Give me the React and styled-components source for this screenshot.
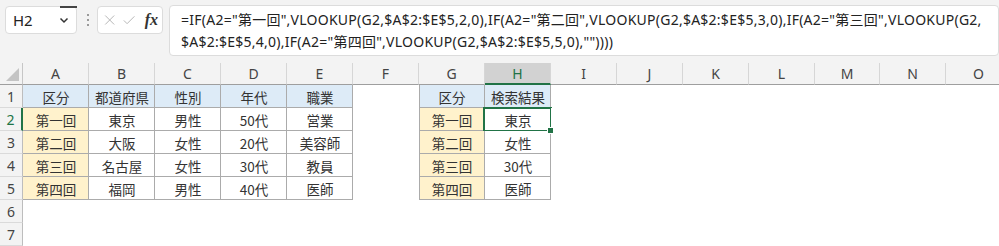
import styled, { createGlobalStyle } from "styled-components"

const GlobalStyle = createGlobalStyle`
body {
  margin: 0;
  background: #ffffff;
  font-family: "Noto Sans", "Noto Sans CJK JP", sans-serif;
}
`

const GREEN = "#217346"
const BORDER = "#ababab"

const Page = styled.div`
width: 999px;
height: 246px;
overflow: hidden;
background: #ffffff;
`

const FormulaBar = styled.div`
display: flex;
align-items: flex-start;
height: 63px;
padding: 5px 0 0 5px;
box-sizing: border-box;
background: #f3f3f3;
overflow: hidden;
`

const NameBox = styled.div`
position: relative;
display: flex;
align-items: center;
justify-content: space-between;
width: 92px;
height: 28px;
margin-top: 1px;
padding: 0 6px 0 7px;
box-sizing: border-box;
background: #ffffff;
border: 1px solid #dcdcdc;
border-radius: 4px;
font-size: 15px;
color: #222;
&::after {
  content: "";
  position: absolute;
  top: -1px;
  right: -1px;
  width: 17px;
  height: 2px;
  background: #444;
}
`

const Dots = styled.div`
display: flex;
flex-direction: column;
gap: 3px;
margin: 9px 8px 0 10px;
span {
  width: 2px;
  height: 2px;
  background: #9a9a9a;
}
`

const FuncBox = styled.div`
display: flex;
align-items: center;
gap: 8px;
width: 66px;
height: 28px;
margin-top: 1px;
padding: 0 4px 0 6px;
box-sizing: border-box;
background: #ffffff;
border: 1px solid #dcdcdc;
border-radius: 4px;
`

const Fx = styled.span`
font-family: "Liberation Serif", serif;
font-style: italic;
font-weight: bold;
font-size: 16px;
color: #333;
margin-left: 1px;
`

const FormulaBox = styled.div`
flex: none;
width: 830px;
height: 51px;
margin-left: 6px;
padding: 3px 0 0 11px;
box-sizing: border-box;
background: #ffffff;
border: 1px solid #dcdcdc;
border-radius: 4px;
font-size: 14px;
letter-spacing: 0.25px;
line-height: 22px;
color: #222;
`

const FormulaLine = styled.div`
white-space: nowrap;
`

const Sheet = styled.div`
display: grid;
grid-template-columns: 23px repeat(12, 66px) 65px 66px 66px;
grid-template-rows: 22px repeat(7, 23px);
font-family: "Noto Sans CJK JP", sans-serif;
`

const Corner = styled.div`
position: relative;
background: #f3f3f3;
border-right: 1px solid #c6c6c6;
border-bottom: 1px solid #9e9e9e;
&::after {
  content: "";
  position: absolute;
  right: 3px;
  bottom: 3px;
  border-style: solid;
  border-width: 0 0 13px 13px;
  border-color: transparent transparent #c4c4c4 transparent;
}
`

const ColHead = styled.div`
display: flex;
align-items: center;
justify-content: center;
background: ${p => (p.$active ? "#d2d2d2" : "#f3f3f3")};
border-right: 1px solid #d6d6d6;
border-bottom: ${p => (p.$active ? `2px solid ${GREEN}` : "1px solid #9e9e9e")};
font-family: "Noto Sans", sans-serif;
font-size: 14px;
color: ${p => (p.$active ? GREEN : "#444")};
`

const RowHead = styled.div`
display: flex;
align-items: center;
justify-content: center;
background: #f3f3f3;
border-bottom: 1px solid #dadada;
border-right: ${p => (p.$active ? `2px solid ${GREEN}` : "1px solid #bdbdbd")};
font-family: "Noto Sans", sans-serif;
font-size: 14px;
color: ${p => (p.$active ? GREEN : "#444")};
`

const fills = { blue: "#ddebf7", yellow: "#fff2cc", white: "#ffffff" }

const Cell = styled.div`
position: relative;
display: flex;
align-items: center;
justify-content: center;
background: ${p => fills[p.$fill] || "#ffffff"};
box-shadow: ${p =>
  p.$boxed
    ? `inset -1px -1px 0 ${BORDER}${p.$left ? `, inset 1px 0 0 ${BORDER}` : ""}`
    : "none"};
font-size: 13.5px;
color: #333;
&::after {
  content: "";
  display: ${p => (p.$selected ? "block" : "none")};
  position: absolute;
  inset: -1px -1px -1px -2px;
  border: 2px solid ${GREEN};
}
`

const Handle = styled.span`
position: absolute;
right: -3px;
bottom: -3px;
width: 5px;
height: 5px;
background: ${GREEN};
border: 1px solid #ffffff;
z-index: 2;
`

const columns = ["A", "B", "C", "D", "E", "F", "G", "H", "I", "J", "K", "L", "M", "N", "O"]

const rows = [
  ["区分", "都道府県", "性別", "年代", "職業", "", "区分", "検索結果"],
  ["第一回", "東京", "男性", "50代", "営業", "", "第一回", "東京"],
  ["第二回", "大阪", "女性", "20代", "美容師", "", "第二回", "女性"],
  ["第三回", "名古屋", "女性", "30代", "教員", "", "第三回", "30代"],
  ["第四回", "福岡", "男性", "40代", "医師", "", "第四回", "医師"],
]

const fillFor = (r, c) => {
  if (r === 0 && c !== 5) return "blue"
  if (c === 0 || c === 6) return "yellow"
  return "white"
}

const App = () => {
  return (
    <Page>
      <GlobalStyle />
      <FormulaBar>
        <NameBox>
          H2
          <svg width="12" height="12" viewBox="0 0 12 12">
            <path d="M2.5 4.5 L6 8 L9.5 4.5" fill="none" stroke="#333" strokeWidth="1.5" />
          </svg>
        </NameBox>
        <Dots>
          <span />
          <span />
          <span />
        </Dots>
        <FuncBox>
          <svg width="14" height="14" viewBox="0 0 14 14">
            <path d="M1.5 1.5 L12.5 12.5 M12.5 1.5 L1.5 12.5" stroke="#b5b5b5" strokeWidth="1.2" />
          </svg>
          <svg width="15" height="14" viewBox="0 0 15 14">
            <path d="M1 7.5 L5 11.5 L14 2.5" fill="none" stroke="#b5b5b5" strokeWidth="1.2" />
          </svg>
          <Fx>fx</Fx>
        </FuncBox>
        <FormulaBox>
          <FormulaLine>
            =IF(A2="第一回",VLOOKUP(G2,$A$2:$E$5,2,0),IF(A2="第二回",VLOOKUP(G2,$A$2:$E$5,3,0),IF(A2="第三回",VLOOKUP(G2,
          </FormulaLine>
          <FormulaLine>
            $A$2:$E$5,4,0),IF(A2="第四回",VLOOKUP(G2,$A$2:$E$5,5,0),""))))
          </FormulaLine>
        </FormulaBox>
      </FormulaBar>
      <Sheet>
        <Corner />
        {columns.map(c => (
          <ColHead key={c} $active={c === "H"}>
            {c}
          </ColHead>
        ))}
        {Array.from({ length: 7 }, (_, r) => (
          <Row key={r} r={r} />
        ))}
      </Sheet>
    </Page>
  )
}

const Row = ({ r }) => {
  const data = rows[r] || []
  return (
    <>
      <RowHead $active={r === 1}>{r + 1}</RowHead>
      {columns.map((c, i) => {
        const inTable = r < 5 && i < 8 && i !== 5
        const selected = r === 1 && i === 7
        return (
          <Cell
            key={c}
            $boxed={inTable}
            $left={inTable && i === 6}
            $fill={inTable ? fillFor(r, i) : "white"}
            $selected={selected}
          >
            {inTable ? data[i] : ""}
            {selected && <Handle />}
          </Cell>
        )
      })}
    </>
  )
}

export default App
